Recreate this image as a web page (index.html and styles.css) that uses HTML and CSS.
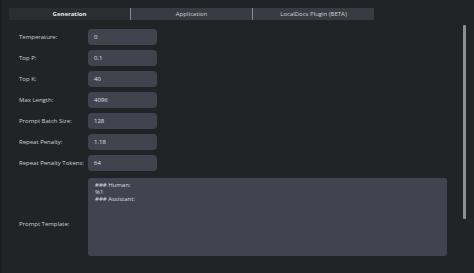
FILE: index.html
```html
<!DOCTYPE html>
<html>
<head>
<meta charset="utf-8">
<link rel="stylesheet" href="styles.css">
</head>
<body>
<div class="window">
  <div class="tabs">
    <div class="tab active">Generation</div>
    <div class="tab">Application</div>
    <div class="tab">LocalDocs Plugin (BETA)</div>
  </div>
  <div class="form">
    <div class="label">Temperature:</div><div class="field">0</div>
    <div class="label">Top P:</div><div class="field">0.1</div>
    <div class="label">Top K:</div><div class="field">40</div>
    <div class="label">Max Length:</div><div class="field">4096</div>
    <div class="label">Prompt Batch Size:</div><div class="field">128</div>
    <div class="label">Repeat Penalty:</div><div class="field">1.18</div>
    <div class="label">Repeat Penalty Tokens:</div><div class="field">64</div>
    <div class="label template-label">Prompt Template:</div>
    <div class="textarea">### Human:<br>%1<br>### Assistant:</div>
  </div>
  <div class="scrollbar"></div>
</div>
</body>
</html>
```
FILE: styles.css
```css
html, body {
  margin: 0;
  padding: 0;
  background: #222327;
}
body {
  width: 474px;
  height: 273px;
  overflow: hidden;
  font-family: "Open Sans", "Noto Sans", sans-serif;
  font-size: 6px;
  color: #d4d4d8;
}
.window {
  position: relative;
  height: 273px;
  box-sizing: border-box;
  padding: 8px 0 0 7px;
  border-left: 2px solid #1b1c1f;
}
.tabs {
  display: flex;
  width: 365px;
  height: 12px;
}
.tab {
  flex: 1;
  display: flex;
  align-items: center;
  justify-content: center;
  background: #3a3b42;
  color: #d0d0d6;
  border-left: 1px solid #8a8a90;
  white-space: nowrap;
}
.tab:first-child {
  border-left: none;
}
.tab.active {
  background: #2c2d31;
  font-weight: bold;
  color: #e6e6ea;
}
.form {
  display: grid;
  grid-template-columns: 69px 69px;
  grid-template-rows: repeat(7, 16px) 80px;
  row-gap: 5px;
  margin-top: 9px;
  padding-left: 10px;
  align-items: center;
}
.label {
  color: #cfcfd4;
  white-space: nowrap;
}
.field {
  height: 16px;
  box-sizing: border-box;
  background: #42434e;
  border-radius: 4px;
  padding-left: 6px;
  display: flex;
  align-items: center;
  color: #e0e0e4;
}
.template-label {
  grid-row: 8;
  padding-top: 16px;
}
.textarea {
  grid-row: 8;
  grid-column: 2;
  width: 359px;
  height: 78px;
  box-sizing: border-box;
  background: #42434e;
  border-radius: 3px;
  padding: 4px 7px;
  line-height: 7px;
  color: #dcdce0;
  margin-top: 2px;
}
.scrollbar {
  position: absolute;
  left: 461px;
  top: 25px;
  width: 3px;
  height: 194px;
  background: #8e8e92;
  border-radius: 1px;
}
```
